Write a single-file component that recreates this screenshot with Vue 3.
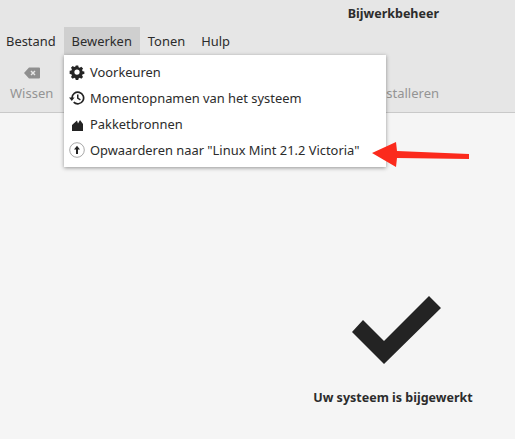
<template>
  <div class="window">
    <header class="top">
      <div class="titlebar">
        <span class="title">Bijwerkbeheer</span>
      </div>
      <nav class="menubar">
        <div v-for="m in menus" :key="m" class="menu-title" :class="{ open: m === 'Bewerken' }">{{ m }}</div>
      </nav>
      <div class="toolbar">
        <div class="tool">
          <svg class="tool-icon" width="16" height="16" viewBox="0 0 16 16">
            <path fill="#8f8f8f" fill-rule="evenodd" d="M5 2.500h10a1 1 0 0 1 1 1v9a1 1 0 0 1-1 1H5L0 8zM7.500 5.500 6.500 6.500 8 8l-1.500 1.500 1 1L9 9l1.500 1.500 1-1L10 8l1.500-1.500-1-1L9 7z" />
          </svg>
          <span>Wissen</span>
        </div>
        <div class="tool install">
          <span>Installeren</span>
        </div>
      </div>
    </header>

    <main class="content">
      <svg class="check" width="90" height="70" viewBox="0 0 90 70">
        <path fill="#232323" d="M0 36 L11 24 L32 45 L77 0 L89 12 L32 68 Z" />
      </svg>
      <p class="status">Uw systeem is bijgewerkt</p>
    </main>

    <ul class="dropdown">
      <li class="item">
        <svg width="16" height="16" viewBox="0 0 16 16">
          <g transform="translate(1 1) scale(.875)">
            <path fill="#232323" fill-rule="evenodd" d="M6.600 0.500h2.800l.4 2 1.300.6 1.800-1.100 2 2-1.100 1.800.6 1.300 2 .4v2.800l-2 .4-.6 1.300 1.100 1.800-2 2-1.800-1.100-1.300.6-.4 2H6.600l-.4-2-1.300-.6-1.800 1.100-2-2 1.100-1.800-.6-1.300-2-.4V6.600l2-.4.600-1.300-1.100-1.800 2-2 1.800 1.100 1.300-.6zM8 5a3 3 0 1 0 0 6 3 3 0 0 0 0-6z" />
          </g>
        </svg>
        <span>Voorkeuren</span>
      </li>
      <li class="item">
        <svg width="16" height="16" viewBox="0 0 16 16">
          <path fill="none" stroke="#232323" stroke-width="1.700" d="M3 8a5.800 5.800 0 1 1 1.700 4.100" />
          <path fill="#232323" d="M0 7.500h5.600L2.800 11zM8 4.500h1.500v3.300l2.300 1.400-.8 1.200L8 8.600z" />
        </svg>
        <span>Momentopnamen van het systeem</span>
      </li>
      <li class="item">
        <svg width="16" height="16" viewBox="0 0 16 16">
          <path fill="#232323" d="M3 15V9L8 4.500 9 7.500 11 4 14 8V15z" />
        </svg>
        <span>Pakketbronnen</span>
      </li>
      <li class="item">
        <svg width="16" height="16" viewBox="0 0 16 16">
          <circle cx="8" cy="8" r="7.300" fill="#fff" stroke="#a8a8a8" />
          <path fill="#232323" d="M8 3.800 11 7.500H9V12H7V7.500H5z" />
        </svg>
        <span>Opwaarderen naar "Linux Mint 21.2 Victoria"</span>
      </li>
    </ul>

    <svg class="arrow" width="98" height="26" viewBox="0 0 98 26">
      <path fill="#fb2a1c" d="M0 11 L24 0 L25 9 L97 12 L97 17 L25 16 L24 25 Z" />
    </svg>
  </div>
</template>

<script setup>
const menus = ['Bestand', 'Bewerken', 'Tonen', 'Hulp']
</script>

<style>
html, body {
  margin: 0;
  background: #f5f5f5;
}
</style>

<style scoped>
.window {
  position: relative;
  width: 515px;
  height: 439px;
  overflow: hidden;
  display: flex;
  flex-direction: column;
  background: #f5f5f5;
  color: #2c2c2c;
  font-family: "Noto Sans", "Open Sans", sans-serif;
  font-size: 13px;
}
.top {
  height: 112px;
  background: #e6e6e6;
  border-bottom: 1px solid #c9c9c9;
}
.titlebar {
  height: 27px;
  display: flex;
  align-items: center;
  justify-content: flex-end;
  padding-right: 76px;
}
.title {
  font-weight: 700;
  font-size: 12.500px;
}
.menubar {
  height: 28px;
  display: flex;
  padding-left: 6px;
  font-size: 12.900px;
}
.menu-title {
  display: flex;
  align-items: center;
  padding: 0 8px;
}
.menu-title:first-child {
  padding-left: 0;
}
.menu-title.open {
  background: #cfcfcf;
}
.toolbar {
  height: 57px;
  display: flex;
  justify-content: space-between;
  color: #949494;
}
.tool {
  display: flex;
  flex-direction: column;
  align-items: center;
  justify-content: flex-end;
  gap: 3px;
  padding: 0 6px 10px 10px;
}
.install {
  padding-right: 76px;
}
.content {
  flex: 1;
  display: flex;
  flex-direction: column;
  align-items: center;
  align-self: flex-end;
  width: 244px;
  padding-top: 183px;
  box-sizing: border-box;
}
.check {
  display: block;
  margin-left: 8px;
}
.status {
  margin: 23px 0 0;
  font-weight: 700;
  font-size: 12.500px;
}
.dropdown {
  position: absolute;
  left: 64px;
  top: 55px;
  width: 322px;
  height: 112px;
  margin: 0;
  padding: 4px 0;
  box-sizing: border-box;
  list-style: none;
  background: #fff;
  box-shadow: 0 1px 4px rgba(0, 0, 0, 0.4);
  font-size: 12.900px;
}
.item {
  height: 26px;
  display: flex;
  align-items: center;
  gap: 5px;
  padding-left: 5px;
}
.arrow {
  position: absolute;
  left: 372px;
  top: 142px;
}
</style>
